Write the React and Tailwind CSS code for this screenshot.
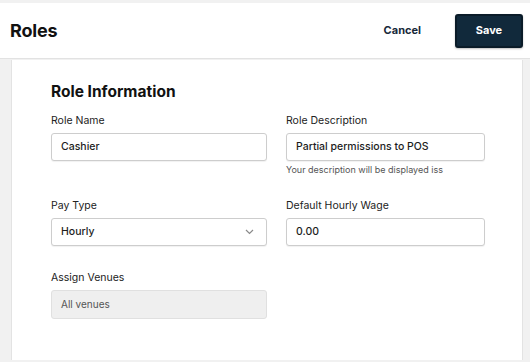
import React from 'react';

function Field({ label, children, helper }) {
  return (
    <div className="flex flex-col">
      <label className="text-[10.5px] leading-[14px] text-[#222] mb-[5px]">{label}</label>
      {children}
      {helper && <p className="mt-[3px] text-[9px] leading-[12px] text-[#555]">{helper}</p>}
    </div>
  );
}

function TextBox({ value }) {
  return (
    <div className="h-[28px] flex items-center px-[9px] border border-[#cdcdcd] rounded-[3px] bg-white shadow-[0_1px_1px_rgba(0,0,0,0.06)] text-[10.5px] font-medium text-[#1d1d1d]">
      {value}
    </div>
  );
}

export default function App() {
  return (
    <div className="w-[530px] h-[362px] bg-[#f1f1f1] overflow-hidden font-['Inter',sans-serif] flex flex-col">
      <div className="mt-[3px] h-[56px] bg-white border-b border-[#e2e2e2] flex items-center pl-[10px] pr-[7px]">
        <h1 className="text-[18px] font-bold text-[#111] tracking-[-0.2px]">Roles</h1>
        <div className="ml-auto flex items-center">
          <button className="text-[11px] font-bold text-[#17293a] mr-[34px]">Cancel</button>
          <button className="w-[68px] h-[34px] rounded-[3px] bg-[#11293b] border-2 border-[#0a1b28] text-white text-[11px] font-bold shadow-[0_1px_2px_rgba(0,0,0,0.25)]">
            Save
          </button>
        </div>
      </div>

      <div className="ml-[11px] mr-[7px] mt-[1px] h-[300px] bg-white border-l border-r border-[#e3e3e3] pl-[39px] pt-[22px]">
        <h2 className="text-[15.5px] leading-[20px] font-bold text-[#111]">Role Information</h2>

        <div className="mt-[12px] grid grid-cols-[216px_199px] gap-x-[19px] items-start">
          <Field label="Role Name">
            <TextBox value="Cashier" />
          </Field>
          <Field label="Role Description" helper="Your description will be displayed iss">
            <TextBox value="Partial permissions to POS" />
          </Field>
        </div>

        <div className="mt-[23px] grid grid-cols-[216px_199px] gap-x-[19px] items-start">
          <Field label="Pay Type">
            <div className="h-[28px] flex items-center px-[9px] border border-[#cdcdcd] rounded-[3px] bg-white shadow-[0_1px_1px_rgba(0,0,0,0.06)] text-[10.5px] font-medium text-[#1d1d1d]">
              Hourly
              <svg className="ml-auto mr-[3px]" width="9" height="6" viewBox="0 0 9 6" fill="none">
                <path d="M1 1l3.5 3.5L8 1" stroke="#8a8a8a" strokeWidth="1.2" />
              </svg>
            </div>
          </Field>
          <Field label="Default Hourly Wage">
            <TextBox value="0.00" />
          </Field>
        </div>

        <div className="mt-[25px] w-[216px]">
          <Field label="Assign Venues">
            <div className="h-[29px] flex items-center px-[9px] border border-[#e0e0e0] rounded-[3px] bg-[#efefef] text-[10px] text-[#555]">
              All venues
            </div>
          </Field>
        </div>
      </div>
    </div>
  );
}
